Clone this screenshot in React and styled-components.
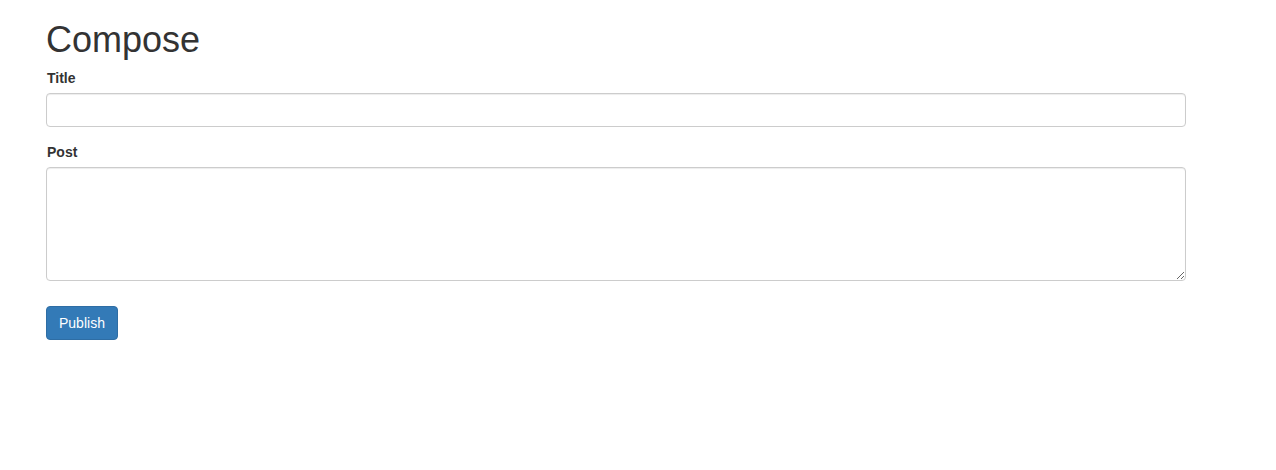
import React from 'react';
import styled, { createGlobalStyle } from 'styled-components';

const GlobalStyle = createGlobalStyle`
  * {
    box-sizing: border-box;
  }

  body {
    margin: 0;
    background: #ffffff;
    font-family: "Liberation Sans", Arial, sans-serif;
    font-size: 14px;
    line-height: 1.42857143;
    color: #333333;
  }
`;

const Container = styled.div`
  width: 1140px;
  margin-left: 46px;
  padding-top: 20px;
`;

const Heading = styled.h1`
  font-size: 36px;
  font-weight: 500;
  line-height: 1.1;
  margin: 0 0 8px;
  color: #333333;
`;

const FormGroup = styled.div`
  margin-bottom: ${(props) => props.spacing || '15px'};
`;

const Label = styled.label`
  display: block;
  font-weight: bold;
  margin-bottom: 5px;
  padding-left: 1px;
  max-width: 100%;
`;

const fieldStyles = `
  display: block;
  width: 100%;
  padding: 6px 12px;
  font-family: inherit;
  font-size: 14px;
  line-height: 1.42857143;
  color: #555555;
  background-color: #ffffff;
  border: 1px solid #cccccc;
  border-radius: 4px;
  box-shadow: inset 0 1px 1px rgba(0, 0, 0, 0.075);
  outline: none;
  margin: 0;
`;

const Input = styled.input`
  ${fieldStyles}
  height: 34px;
`;

const TextArea = styled.textarea`
  ${fieldStyles}
  height: 114px;
  resize: vertical;
`;

const Button = styled.button`
  display: inline-block;
  height: 34px;
  padding: 6px 12px;
  font-family: inherit;
  font-size: 14px;
  line-height: 1.42857143;
  color: #ffffff;
  background-color: #337ab7;
  border: 1px solid #2e6da4;
  border-radius: 4px;
  cursor: pointer;

  &:hover {
    background-color: #286090;
  }
`;

const App = () => {
  return (
    <>
      <GlobalStyle />
      <Container>
        <Heading>Compose</Heading>
        <form onSubmit={(e) => e.preventDefault()}>
          <FormGroup>
            <Label htmlFor="title">Title</Label>
            <Input id="title" type="text" />
          </FormGroup>
          <FormGroup spacing="25px">
            <Label htmlFor="post">Post</Label>
            <TextArea id="post" rows={5} />
          </FormGroup>
          <Button type="submit">Publish</Button>
        </form>
      </Container>
    </>
  );
};

export default App;
